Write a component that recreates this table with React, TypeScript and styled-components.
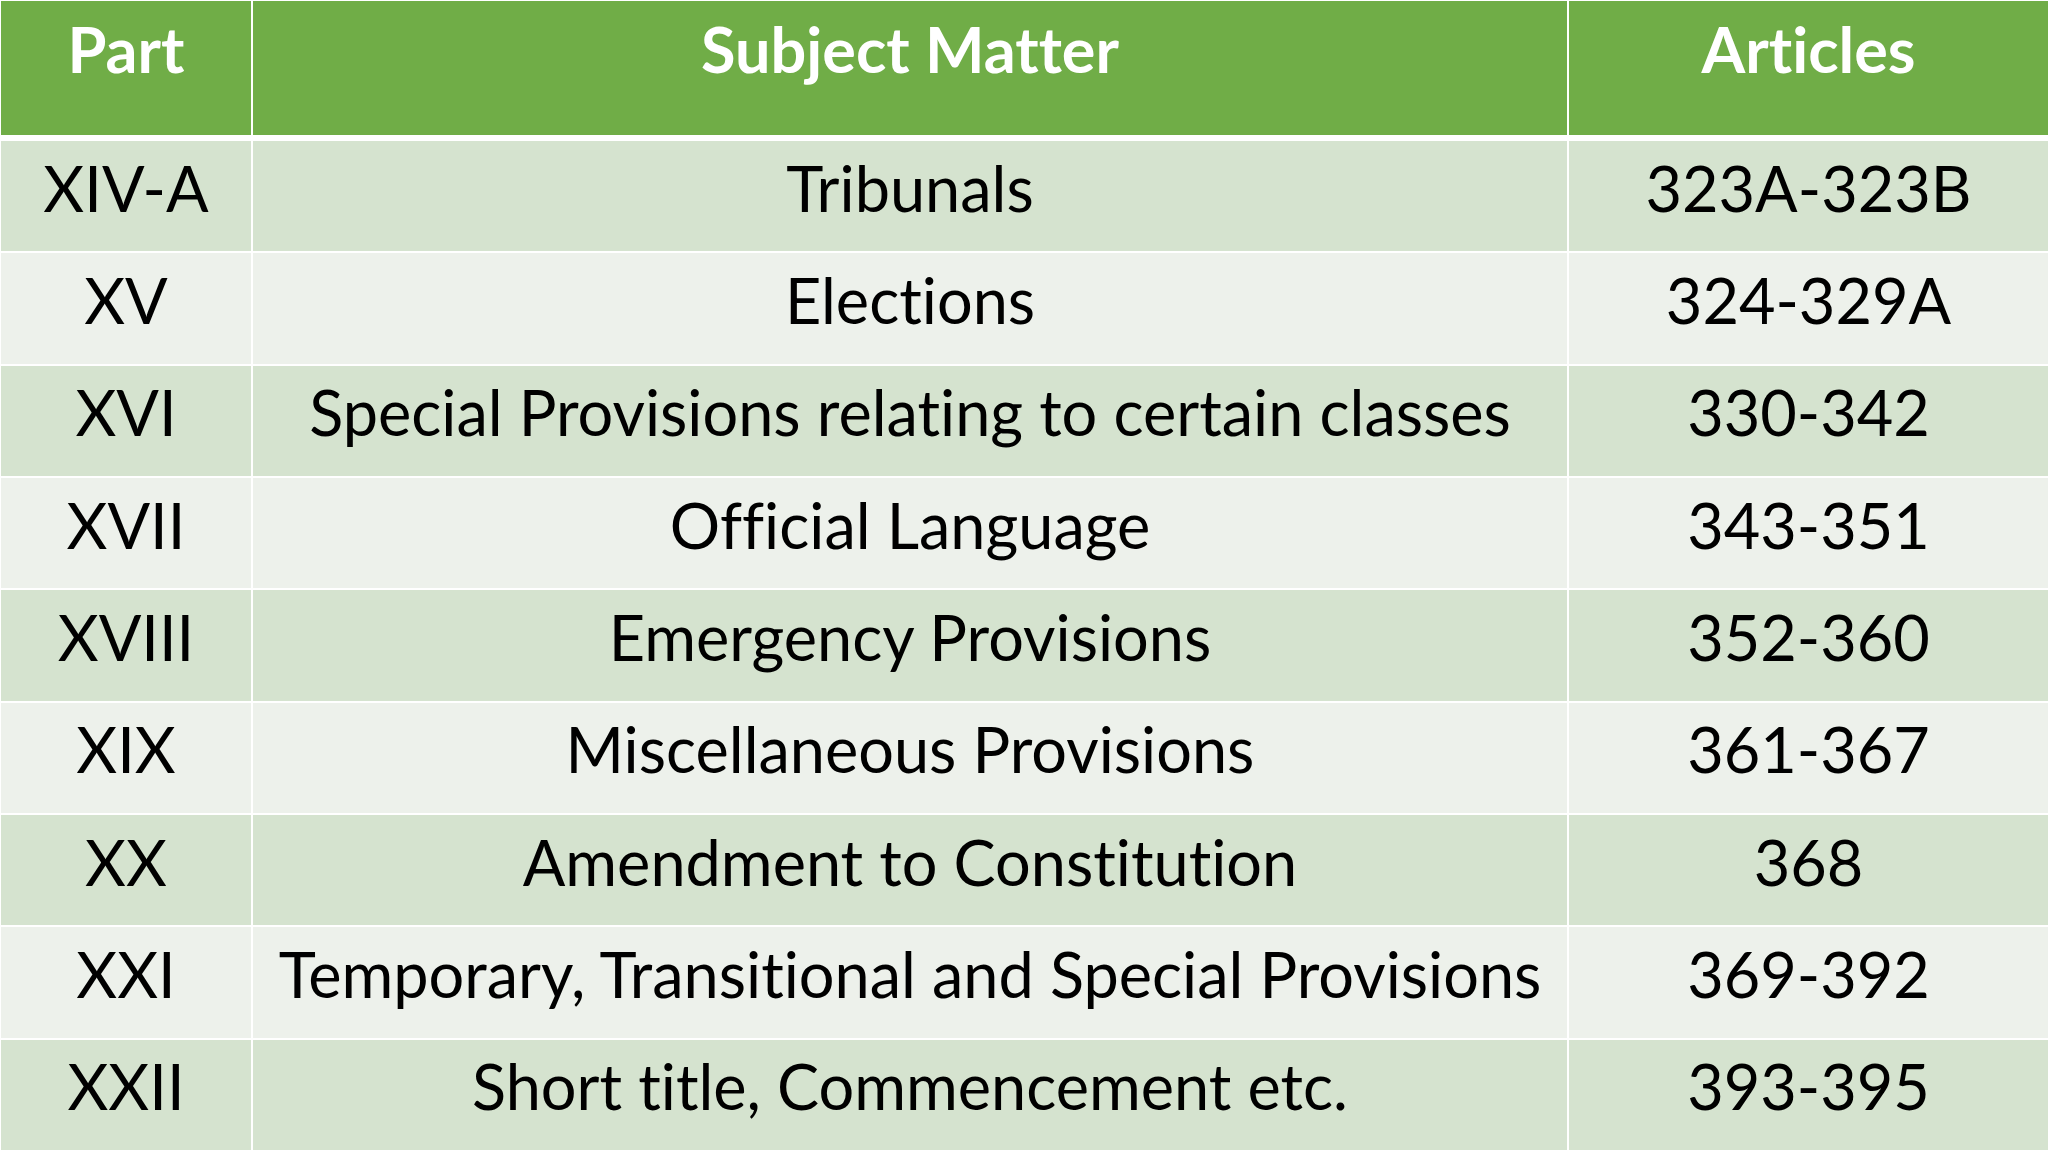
import styled, { createGlobalStyle } from 'styled-components';

const GlobalStyle = createGlobalStyle`
    html, body {
        margin: 0;
        padding: 0;
        background: #ffffff;
    }

    body {
        font-family: Lato, "Liberation Sans", sans-serif;
        font-variant-ligatures: none;
        font-feature-settings: "liga" 0, "clig" 0, "dlig" 0;
    }
`;

const COLUMNS = '250px 1314px 1fr';

const rows = [
    { part: 'XIV-A', subject: 'Tribunals', articles: '323A-323B' },
    { part: 'XV', subject: 'Elections', articles: '324-329A' },
    { part: 'XVI', subject: 'Special Provisions relating to certain classes', articles: '330-342' },
    { part: 'XVII', subject: 'Official Language', articles: '343-351' },
    { part: 'XVIII', subject: 'Emergency Provisions', articles: '352-360' },
    { part: 'XIX', subject: 'Miscellaneous Provisions', articles: '361-367' },
    { part: 'XX', subject: 'Amendment to Constitution', articles: '368' },
    { part: 'XXI', subject: 'Temporary, Transitional and Special Provisions', articles: '369-392' },
    { part: 'XXII', subject: 'Short title, Commencement etc.', articles: '393-395' },
];

const Table = styled.div`
    width: 2048px;
    height: 1152px;
    box-sizing: border-box;
    padding: 1px 0 2px 1px;
    display: flex;
    flex-direction: column;
    background: #ffffff;
    overflow: hidden;
`;

const HeaderRow = styled.div`
    display: grid;
    grid-template-columns: ${COLUMNS};
    column-gap: 2px;
    height: 134px;
    margin-bottom: 6px;
    flex: none;
`;

const HeaderCell = styled.div`
    background: #70ad47;
    color: #ffffff;
    font-weight: 700;
    font-size: 63px;
    line-height: 1;
    display: flex;
    justify-content: center;
    align-items: flex-start;
    padding-top: 16px;
`;

const Body = styled.div`
    flex: 1;
    display: flex;
    flex-direction: column;
    gap: 2px;
`;

const BodyRow = styled.div<{ $band: boolean }>`
    flex: 1;
    display: grid;
    grid-template-columns: ${COLUMNS};
    column-gap: 2px;
    background: #ffffff;

    & > div {
        background: ${(p) => (p.$band ? '#d5e3cf' : '#edf1eb')};
    }
`;

const Cell = styled.div`
    color: #000000;
    font-size: 63px;
    line-height: 1;
    display: flex;
    justify-content: center;
    align-items: center;
    padding-bottom: 18px;
    white-space: nowrap;
`;

export default function App() {
    return (
        <>
            <GlobalStyle />
            <Table>
                <HeaderRow>
                    <HeaderCell>Part</HeaderCell>
                    <HeaderCell>Subject Matter</HeaderCell>
                    <HeaderCell>Articles</HeaderCell>
                </HeaderRow>
                <Body>
                    {rows.map((row, i) => (
                        <BodyRow key={row.part} $band={i % 2 === 0}>
                            <Cell>{row.part}</Cell>
                            <Cell>{row.subject}</Cell>
                            <Cell>{row.articles}</Cell>
                        </BodyRow>
                    ))}
                </Body>
            </Table>
        </>
    );
}
